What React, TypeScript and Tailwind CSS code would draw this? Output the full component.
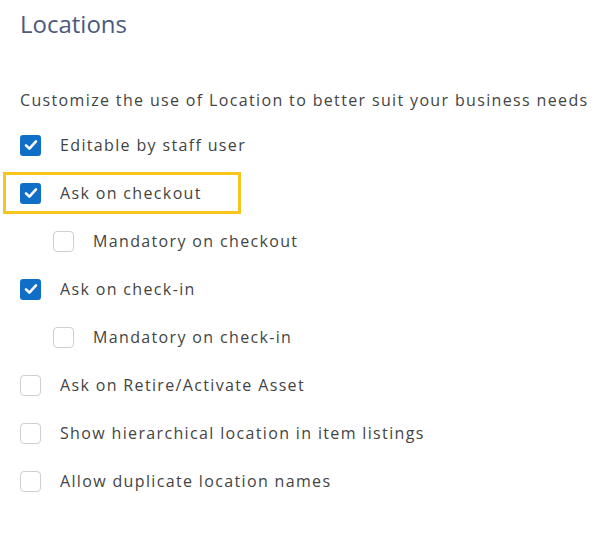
import React from 'react';

type Item = { label: string; checked: boolean; nested?: boolean; highlight?: boolean };

const items: Item[] = [
  { label: 'Editable by staff user', checked: true },
  { label: 'Ask on checkout', checked: true, highlight: true },
  { label: 'Mandatory on checkout', checked: false, nested: true },
  { label: 'Ask on check-in', checked: true },
  { label: 'Mandatory on check-in', checked: false, nested: true },
  { label: 'Ask on Retire/Activate Asset', checked: false },
  { label: 'Show hierarchical location in item listings', checked: false },
  { label: 'Allow duplicate location names', checked: false },
];

function Checkbox({ checked }: { checked: boolean }) {
  if (checked) {
    return (
      <span className="flex h-[21px] w-[21px] shrink-0 items-center justify-center rounded-[3px] bg-[#0f6fc6]">
        <svg width="16" height="16" viewBox="0 0 16 16" fill="none">
          <path d="M3 8.4 L6.4 11.6 L13 4.4" stroke="white" strokeWidth="2.6" strokeLinecap="round" strokeLinejoin="round" />
        </svg>
      </span>
    );
  }
  return <span className="h-[21px] w-[21px] shrink-0 rounded-[4px] border border-[#cfcfcf] bg-white" />;
}

export default function App() {
  return (
    <div className="min-h-[533px] w-[609px] bg-white pl-5 pt-[8px] font-['Open_Sans',sans-serif]">
      <h1 className="text-[24px] leading-8 font-normal text-[#4b5a7e]">Locations</h1>
      <p className="mt-[48px] text-[16px] leading-6 tracking-[1.35px] text-[#444]">
        Customize the use of Location to better suit your business needs
      </p>
      <div className="mt-[9px] flex flex-col">
        {items.map((item) => (
          <div
            key={item.label}
            className={`relative flex h-12 items-center ${item.nested ? 'pl-[33px]' : ''}`}
          >
            {item.highlight && (
              <div className="pointer-events-none absolute -left-[17px] top-[3px] h-[42px] w-[238px] border-[3px] border-[#f7c51b]" />
            )}
            <Checkbox checked={item.checked} />
            <span className="ml-[19px] text-[16px] leading-6 tracking-[1.35px] text-[#444]">{item.label}</span>
          </div>
        ))}
      </div>
    </div>
  );
}
